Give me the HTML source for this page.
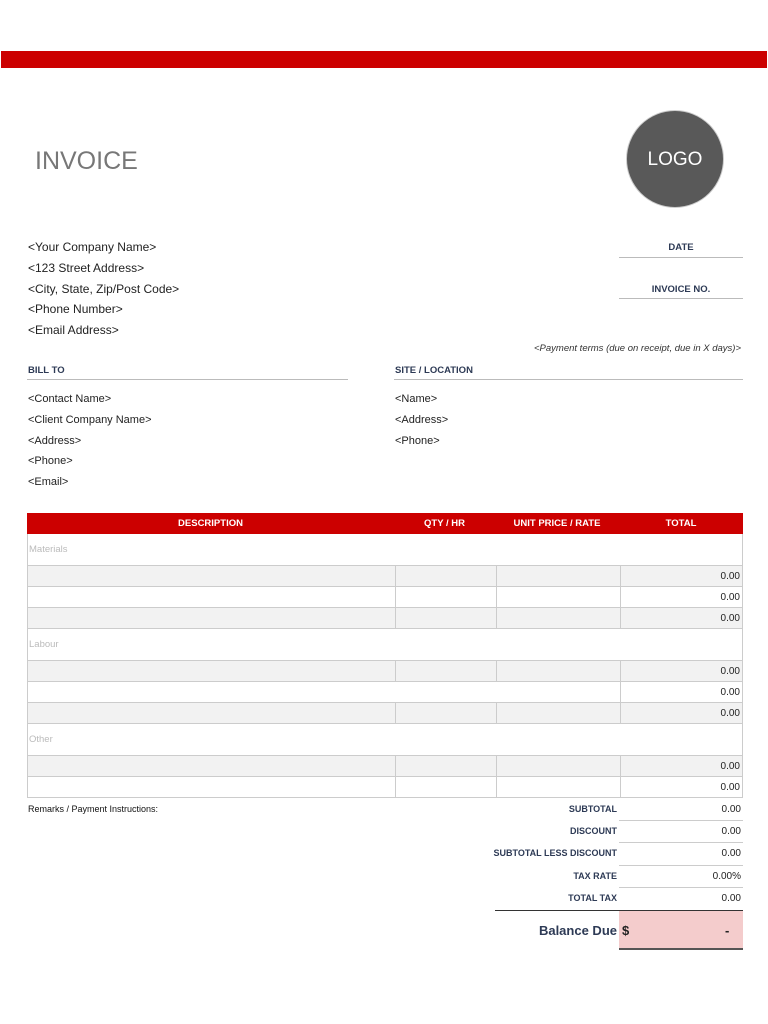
<!DOCTYPE html>
<html><head><style>
body{margin:0;width:768px;height:1024px;background:#fff;position:relative;font-family:"Liberation Sans",Arial,sans-serif;overflow:hidden}
.a{position:absolute;white-space:nowrap}
.t{font-size:12px;color:#222}
.lbl{font-size:9.5px;font-weight:bold;color:#2d3a55}
.r{position:absolute;left:27px;width:716px;box-sizing:border-box;border-bottom:1px solid #ccc;border-left:1px solid #ccc;border-right:1px solid #ccc}
.g{background:#f2f2f2}
.c{position:absolute;top:0;bottom:0;border-left:1px solid #ccc}
.v{position:absolute;right:2px;font-size:10px;color:#222}
.sec{position:absolute;left:1px;font-size:9.5px;color:#bbb}
.sl{position:absolute;right:151px;font-size:9px;font-weight:bold;color:#2d3a55;text-align:right}
.sv{position:absolute;right:27px;font-size:10px;color:#222}
.ln{position:absolute;left:619px;width:124px;height:1px;background:#ccc}
</style></head><body>
<div class="a" style="left:1px;top:51px;width:766px;height:17px;background:#cc0000"></div>
<div class="a" style="left:35px;top:147px;font-size:25px;color:#777">INVOICE</div>
<div class="a" style="left:626px;top:110px;width:98px;height:98px;border-radius:50%;background:#595959;border:1px solid #ccc;box-sizing:border-box"></div>
<div class="a" style="left:626px;top:149px;width:98px;text-align:center;color:#fff;font-size:19px">LOGO</div>
<div class="a t" style="left:28px;top:240px">&lt;Your Company Name&gt;</div>
<div class="a t" style="left:28px;top:261px">&lt;123 Street Address&gt;</div>
<div class="a t" style="left:28px;top:282px">&lt;City, State, Zip/Post Code&gt;</div>
<div class="a t" style="left:28px;top:302px">&lt;Phone Number&gt;</div>
<div class="a t" style="left:28px;top:323px">&lt;Email Address&gt;</div>
<div class="a lbl" style="left:619px;width:124px;text-align:center;top:242px">DATE</div>
<div class="a" style="left:619px;top:257px;width:124px;height:1px;background:#bbb"></div>
<div class="a lbl" style="left:619px;width:124px;text-align:center;top:284px">INVOICE NO.</div>
<div class="a" style="left:619px;top:298px;width:124px;height:1px;background:#bbb"></div>
<div class="a" style="right:27px;top:343px;font-size:9.5px;font-style:italic;color:#333">&lt;Payment terms (due on receipt, due in X days)&gt;</div>
<div class="a lbl" style="left:28px;top:365px">BILL TO</div>
<div class="a" style="left:27px;top:379px;width:321px;height:1px;background:#bbb"></div>
<div class="a lbl" style="left:395px;top:365px">SITE / LOCATION</div>
<div class="a" style="left:394px;top:379px;width:349px;height:1px;background:#bbb"></div>
<div class="a" style="left:28px;top:389px;font-size:11px;line-height:20.8px;color:#222">&lt;Contact Name&gt;<br>&lt;Client Company Name&gt;<br>&lt;Address&gt;<br>&lt;Phone&gt;<br>&lt;Email&gt;</div>
<div class="a" style="left:395px;top:389px;font-size:11px;line-height:20.8px;color:#222">&lt;Name&gt;<br>&lt;Address&gt;<br>&lt;Phone&gt;</div>
<div class="a" style="left:27px;top:513px;width:716px;height:21px;background:#cc0000;color:#fff;font-size:9.5px;font-weight:bold">
<span class="a" style="left:0;width:367px;text-align:center;top:5px">DESCRIPTION</span>
<span class="a" style="left:367px;width:101px;text-align:center;top:5px">QTY / HR</span>
<span class="a" style="left:468px;width:124px;text-align:center;top:5px">UNIT PRICE / RATE</span>
<span class="a" style="left:592px;width:124px;text-align:center;top:5px">TOTAL</span></div>

<div class="r" style="top:534px;height:32px"><span class="sec" style="top:10px">Materials</span></div>
<div class="r g" style="top:566px;height:21px"><div class="c" style="left:367px"></div><div class="c" style="left:468px"></div><div class="c" style="left:592px"></div><span class="v" style="top:5px">0.00</span></div>
<div class="r" style="top:587px;height:21px"><div class="c" style="left:367px"></div><div class="c" style="left:468px"></div><div class="c" style="left:592px"></div><span class="v" style="top:5px">0.00</span></div>
<div class="r g" style="top:608px;height:21px"><div class="c" style="left:367px"></div><div class="c" style="left:468px"></div><div class="c" style="left:592px"></div><span class="v" style="top:5px">0.00</span></div>
<div class="r" style="top:629px;height:32px"><span class="sec" style="top:10px">Labour</span></div>
<div class="r g" style="top:661px;height:21px"><div class="c" style="left:367px"></div><div class="c" style="left:468px"></div><div class="c" style="left:592px"></div><span class="v" style="top:5px">0.00</span></div>
<div class="r" style="top:682px;height:21px"><div class="c" style="left:592px"></div><span class="v" style="top:5px">0.00</span></div>
<div class="r g" style="top:703px;height:21px"><div class="c" style="left:367px"></div><div class="c" style="left:468px"></div><div class="c" style="left:592px"></div><span class="v" style="top:5px">0.00</span></div>
<div class="r" style="top:724px;height:32px"><span class="sec" style="top:10px">Other</span></div>
<div class="r g" style="top:756px;height:21px"><div class="c" style="left:367px"></div><div class="c" style="left:468px"></div><div class="c" style="left:592px"></div><span class="v" style="top:5px">0.00</span></div>
<div class="r" style="top:777px;height:21px"><div class="c" style="left:367px"></div><div class="c" style="left:468px"></div><div class="c" style="left:592px"></div><span class="v" style="top:5px">0.00</span></div>

<div class="a" style="left:28px;top:804px;font-size:9px;color:#111">Remarks / Payment Instructions:</div>
<div class="sl" style="top:804px">SUBTOTAL</div><div class="sv" style="top:804px">0.00</div><div class="ln" style="top:820px"></div>
<div class="sl" style="top:826px">DISCOUNT</div><div class="sv" style="top:826px">0.00</div><div class="ln" style="top:842px"></div>
<div class="sl" style="top:848px">SUBTOTAL LESS DISCOUNT</div><div class="sv" style="top:848px">0.00</div><div class="ln" style="top:865px"></div>
<div class="sl" style="top:871px">TAX RATE</div><div class="sv" style="top:871px">0.00%</div><div class="ln" style="top:887px"></div>
<div class="sl" style="top:893px">TOTAL TAX</div><div class="sv" style="top:893px">0.00</div>
<div class="a" style="left:495px;top:910px;width:248px;height:1px;background:#333"></div>
<div class="a" style="left:619px;top:911px;width:124px;height:37px;background:#f4cccc;border-bottom:2px solid #555"></div>
<div class="a" style="right:151px;top:923px;font-size:13px;font-weight:bold;color:#2d3a55">Balance Due</div>
<div class="a" style="left:622px;top:923px;font-size:13px;font-weight:bold;color:#222">$</div>
<div class="a" style="left:725px;top:923px;font-size:13px;font-weight:bold;color:#222">-</div>
</body></html>
